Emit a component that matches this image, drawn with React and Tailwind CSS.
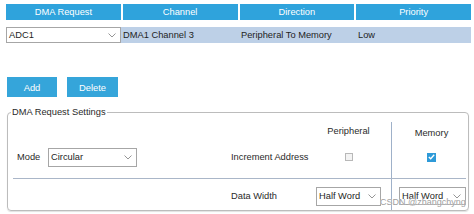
import React from 'react';

const Chevron = () => (
  <svg width="8" height="5" viewBox="0 0 8 5" className="shrink-0">
    <polyline points="0.5,0.5 4,4 7.5,0.5" fill="none" stroke="#8a8a8a" strokeWidth="0.9" />
  </svg>
);

const Select = ({ value, className }) => (
  <div className={`flex items-center justify-between bg-white border border-[#a6a6a6] pl-[2px] pr-[4px] text-[#1e1e1e] ${className}`}>
    <span>{value}</span>
    <Chevron />
  </div>
);

const App = () => {
  return (
    <div className="relative w-[474px] h-[214px] overflow-hidden bg-white pt-[4px] pl-[6px] font-['Liberation_Sans',Arial,sans-serif] text-[9.3px] leading-[11px] text-[#2a2a2a]">
      {/* table header */}
      <div className="flex w-[465px] gap-[2px] text-white">
        {['DMA Request', 'Channel', 'Direction', 'Priority'].map((h) => (
          <div key={h} className="flex h-[16px] flex-1 items-center justify-center bg-[#2fa3dc]">
            {h}
          </div>
        ))}
      </div>

      {/* table row */}
      <div className="mt-[7px] flex h-[16px] w-[465px]">
        <Select value="ADC1" className="w-[115px] h-[16px]" />
        <div className="flex flex-1 items-center bg-[#bdd0e7] text-[#1e1e1e]">
          <div className="w-[119px] pl-[2px]">DMA1 Channel 3</div>
          <div className="w-[116px] pl-[1px]">Peripheral To Memory</div>
          <div className="flex-1 pl-[2px]">Low</div>
        </div>
      </div>

      {/* buttons */}
      <div className="mt-[34px] ml-[1px] flex gap-[10px] text-white text-[9.4px]">
        <button className="flex h-[20px] w-[50px] items-center justify-center bg-[#35a5da]">Add</button>
        <button className="flex h-[20px] w-[51px] items-center justify-center bg-[#35a5da]">Delete</button>
      </div>

      {/* settings fieldset */}
      <fieldset className="mt-[10px] ml-[1px] w-[462px] rounded-[4px] border border-[#bcbcbc] shadow-[0_1px_1px_rgba(0,0,0,0.12)]">
        <legend className="ml-[3px] px-[1px] leading-[11px]">DMA Request Settings</legend>

        <div className="flex">
          <div className="flex w-[383px] flex-col">
            <div className="flex h-[26px] items-center">
              <div className="ml-[308px] w-[65px] text-center">Peripheral</div>
            </div>
            <div className="flex h-[26px] items-center">
              <span className="ml-[9px] w-[31px]">Mode</span>
              <Select value="Circular" className="w-[89px] h-[19px]" />
              <span className="ml-[94px] w-[85px]">Increment Address</span>
              <div className="flex w-[65px] justify-center">
                <div className="h-[8px] w-[8px] border border-[#b8b8b8] bg-[#f3f3f3]" />
              </div>
            </div>
            <div className="h-[8px]" />
          </div>
          <div className="mt-[4px] flex flex-1 flex-col border-l border-[#9fb1c9]">
            <div className="flex h-[22px] items-center justify-center pl-[3px]">Memory</div>
            <div className="flex h-[26px] items-center justify-center pl-[3px]">
              <div className="flex h-[9px] w-[9px] items-center justify-center bg-[#2e9ad8]">
                <svg width="7" height="6" viewBox="0 0 7 6">
                  <polyline points="0.8,3 2.7,4.8 6.2,0.8" fill="none" stroke="white" strokeWidth="1.3" />
                </svg>
              </div>
            </div>
          </div>
        </div>

        <div className="ml-[5px] mr-[2px] border-t border-[#aab6c8]" />

        <div className="flex h-[31px]">
          <div className="flex w-[383px] items-center pt-[3px]">
            <span className="ml-[223px] w-[85px]">Data Width</span>
            <Select value="Half Word" className="w-[65px] h-[19px]" />
          </div>
          <div className="flex flex-1 items-center border-l border-[#9fb1c9] pt-[3px]">
            <Select value="Half Word" className="ml-[7px] w-[67px] h-[18px]" />
          </div>
        </div>
      </fieldset>

      {/* watermark over the bottom-right corner */}
      <div className="absolute left-[380px] top-[197px] text-[9px] leading-[10px] text-[#a0a0a0] [text-shadow:0_0_1px_white]">
        CSDN @zhangchyng
      </div>
    </div>
  );
};

export default App;
